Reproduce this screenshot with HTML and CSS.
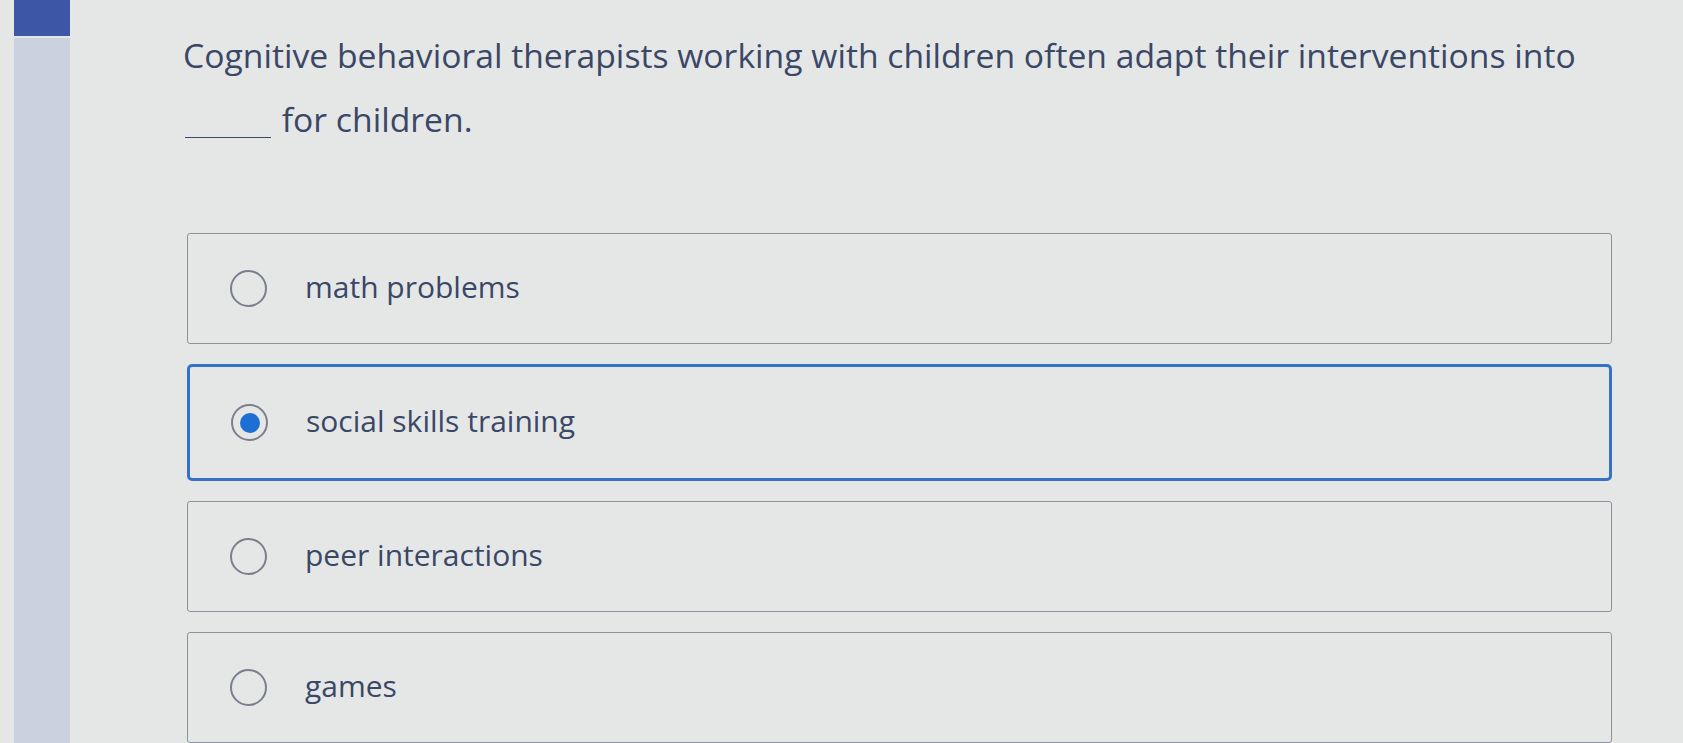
FILE: index.html
```html
<!DOCTYPE html>
<html lang="en">
<head>
<meta charset="utf-8">
<title>Question</title>
<link rel="stylesheet" href="styles.css">
</head>
<body>
<div class="page">
  <aside class="rail">
    <div class="rail-active"></div>
    <div class="rail-track"></div>
  </aside>
  <main class="question">
    <p class="prompt">Cognitive behavioral therapists working with children often adapt their interventions into <span class="blank"></span> for children.</p>
    <div class="choices">
      <label class="choice">
        <span class="radio"></span>
        <span class="choice-text">math problems</span>
      </label>
      <label class="choice choice-selected">
        <span class="radio radio-on"><span class="radio-dot"></span></span>
        <span class="choice-text">social skills training</span>
      </label>
      <label class="choice">
        <span class="radio"></span>
        <span class="choice-text">peer interactions</span>
      </label>
      <label class="choice">
        <span class="radio"></span>
        <span class="choice-text">games</span>
      </label>
    </div>
  </main>
</div>
</body>
</html>
```

FILE: styles.css
```css
html, body {
  margin: 0;
  padding: 0;
  height: 100%;
  overflow: hidden;
}

body {
  background: #e5e7e6;
  font-family: "Open Sans", "Noto Sans", sans-serif;
  color: #3b4766;
}

.page {
  display: flex;
  height: 743px;
}

.rail {
  margin-left: 14px;
  width: 56px;
  display: flex;
  flex-direction: column;
  flex-shrink: 0;
}

.rail-active {
  height: 36px;
  background: #3e56a6;
}

.rail-track {
  flex: 1;
  margin-top: 2px;
  background: #cad1df;
}

.question {
  padding: 23px 0 0 113px;
  flex: 1;
}

.prompt {
  margin: 0;
  font-size: 33.7px;
  line-height: 64px;
  width: 1440px;
}

.blank {
  display: inline-block;
  width: 86px;
  border-bottom: 1.5px solid #3b4766;
  margin: 0 2px 0 2px;
  vertical-align: -6px;
}

.choices {
  margin: 82px 0 0 4px;
  width: 1425px;
  display: flex;
  flex-direction: column;
  gap: 20px;
}

.choice {
  box-sizing: border-box;
  height: 111px;
  border: 1.5px solid #8d919c;
  border-radius: 3px;
  display: flex;
  align-items: center;
  padding-left: 42px;
}

.choice-selected {
  height: 117px;
  border: 3px solid #3472c8;
  border-radius: 5px;
  padding-left: 41px;
}

.radio {
  box-sizing: border-box;
  width: 37px;
  height: 37px;
  border: 2px solid #7a7f8b;
  border-radius: 50%;
  flex-shrink: 0;
  display: flex;
  align-items: center;
  justify-content: center;
}

.radio-dot {
  width: 20px;
  height: 20px;
  border-radius: 50%;
  background: #1e6fd3;
}

.choice-text {
  margin-left: 38px;
  font-size: 30px;
  line-height: 40px;
  margin-top: -4px;
}
```
